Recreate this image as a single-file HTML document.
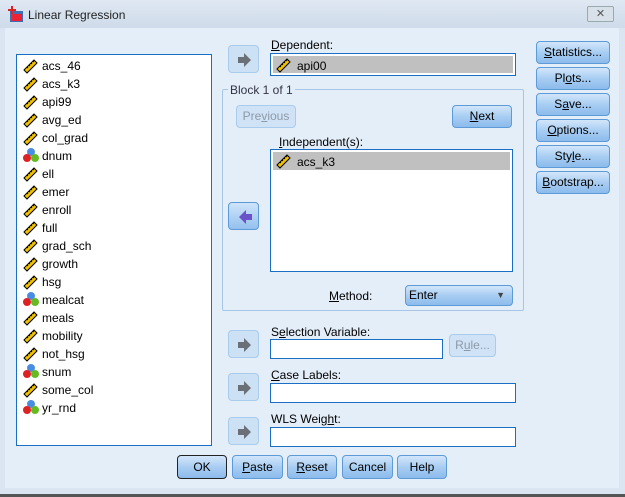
<!DOCTYPE html><html><head><style>
*{box-sizing:border-box;margin:0;padding:0}
body{width:625px;height:497px;overflow:hidden;background:#dbe5f1;font-family:"Liberation Sans",sans-serif;font-size:12px;color:#000;position:relative}
.a{position:absolute}
.title{left:0;top:0;width:625px;height:28px;background:linear-gradient(#dfe8f3,#cfdbea)}
.body{left:5px;top:28px;width:614px;height:460px;background:#e3eef9}
.list{background:#fff;border:1px solid #1a6fc4}
.btn{position:absolute;border:1px solid #5c9ad8;border-radius:4px;background:linear-gradient(#d3e6fa,#a8cdf2 50%,#8cbbec);text-align:center;font-size:12px;line-height:20px}
.dis{border-color:#a9cbec;background:#cfe2f6;color:#8d9aa8}
.arr{position:absolute;width:31px;height:28px;border:1px solid #a9cbec;border-radius:4px;background:#cde1f5}
.arr svg{position:absolute;left:7px;top:5px}
.lbl{position:absolute;font-size:12px}
u{text-decoration:underline}
</style></head><body>
<div class="a title"></div>
<svg class="a" style="left:6px;top:5px" width="18" height="18"><rect x="4" y="6" width="13" height="11" fill="#3f6fb3"/><rect x="6" y="9" width="10" height="7" fill="#e23"/><path d="M2 5h8M6 1v8" stroke="#d22" stroke-width="2"/></svg>
<div class="lbl" style="left:28px;top:8px;font-size:12px;color:#222">Linear Regression</div>
<div class="a" style="left:587px;top:6px;width:27px;height:16px;border:1px solid #9aa;border-radius:2px;background:#d8e0ea;text-align:center;font-size:11px;line-height:14px;color:#555">✕</div>
<div class="a body"></div>
<div class="a list" style="left:16px;top:54px;width:196px;height:392px"></div>
<div id="L"></div>
<svg width="0" height="0" style="position:absolute"><defs>
<g id="r"><path d="M2 13L12 3L15 6L5 16Z" fill="#f2c200" stroke="#000" stroke-width="1"/><path d="M5 10l1 1M7 8l1 1M9 6l1 1M11 4l1 1" stroke="#000"/></g>
<g id="n"><circle cx="9" cy="5" r="4" fill="#4a8de0"/><circle cx="5" cy="11" r="4" fill="#d22"/><circle cx="13" cy="11" r="4" fill="#6b2"/></g>
<path id="ra" d="M2 6L8 6L8 2L15 9L8 16L8 12L2 12Z"/>
</defs></svg>
<script>
var v=[["acs_46","r"],["acs_k3","r"],["api99","r"],["avg_ed","r"],["col_grad","r"],["dnum","n"],["ell","r"],["emer","r"],["enroll","r"],["full","r"],["grad_sch","r"],["growth","r"],["hsg","r"],["mealcat","n"],["meals","r"],["mobility","r"],["not_hsg","r"],["snum","n"],["some_col","r"],["yr_rnd","n"]];
var h="";v.forEach(function(x,i){var y=57+i*18;h+='<svg class="a" style="left:22px;top:'+(y)+'px" width="18" height="18"><use href="#'+x[1]+'"/></svg><div class="lbl" style="left:42px;top:'+(y+2)+'px">'+x[0]+'</div>'});document.getElementById("L").innerHTML=h;
</script>
<div class="arr" style="left:228px;top:45px"><svg width="18" height="18"><use href="#ra" fill="#6b6f78"/></svg></div>
<div class="lbl" style="left:271px;top:38px"><u>D</u>ependent:</div>
<div class="a list" style="left:270px;top:53px;width:246px;height:23px"><div class="a" style="left:2px;top:2px;width:240px;height:17px;background:#c0c0c0"></div></div>
<svg class="a" style="left:275px;top:56px" width="18" height="18"><use href="#r"/></svg><div class="lbl" style="left:297px;top:59px">api00</div>
<div class="a" style="left:222px;top:89px;width:302px;height:222px;border:1px solid #a7c6e6;border-radius:2px"></div>
<div class="lbl" style="left:228px;top:83px;background:#e3eef9;padding:0 2px;color:#334">Block 1 of 1</div>
<div class="btn dis" style="left:236px;top:105px;width:60px;height:23px">Pre<u>v</u>ious</div>
<div class="btn" style="left:452px;top:105px;width:60px;height:23px"><u>N</u>ext</div>
<div class="lbl" style="left:279px;top:135px"><u>I</u>ndependent(s):</div>
<div class="a list" style="left:270px;top:149px;width:243px;height:123px"><div class="a" style="left:2px;top:2px;width:237px;height:18px;background:#c0c0c0"></div></div>
<svg class="a" style="left:275px;top:152px" width="18" height="18"><use href="#r"/></svg><div class="lbl" style="left:297px;top:155px">acs_k3</div>
<div class="arr" style="left:228px;top:202px;border-color:#5c9ad8;background:linear-gradient(#cfe4fa,#94c0ee)"><svg width="18" height="18" style="transform:scaleX(-1)"><use href="#ra" fill="#6a52c8"/></svg></div>
<div class="lbl" style="left:329px;top:289px"><u>M</u>ethod:</div>
<div class="btn" style="left:405px;top:285px;width:108px;height:21px;text-align:left;padding-left:3px;line-height:19px">Enter<span style="position:absolute;right:7px;top:0;font-size:9px;color:#444">▼</span></div>
<div class="arr" style="left:228px;top:330px"><svg width="18" height="18"><use href="#ra" fill="#6b6f78"/></svg></div>
<div class="lbl" style="left:271px;top:325px">S<u>e</u>lection Variable:</div>
<div class="a list" style="left:270px;top:339px;width:173px;height:20px"></div>
<div class="btn dis" style="left:449px;top:334px;width:47px;height:23px">R<u>u</u>le...</div>
<div class="arr" style="left:228px;top:373px"><svg width="18" height="18"><use href="#ra" fill="#6b6f78"/></svg></div>
<div class="lbl" style="left:271px;top:368px"><u>C</u>ase Labels:</div>
<div class="a list" style="left:270px;top:383px;width:246px;height:20px"></div>
<div class="arr" style="left:228px;top:417px"><svg width="18" height="18"><use href="#ra" fill="#6b6f78"/></svg></div>
<div class="lbl" style="left:271px;top:412px">WLS Weig<u>h</u>t:</div>
<div class="a list" style="left:270px;top:427px;width:246px;height:20px"></div>
<div class="btn" style="left:177px;top:455px;width:50px;height:24px;border:1px solid #222;line-height:22px">OK</div>
<div class="btn" style="left:232px;top:455px;width:51px;height:24px;line-height:22px"><u>P</u>aste</div>
<div class="btn" style="left:287px;top:455px;width:50px;height:24px;line-height:22px"><u>R</u>eset</div>
<div class="btn" style="left:342px;top:455px;width:51px;height:24px;line-height:22px">Cancel</div>
<div class="btn" style="left:397px;top:455px;width:50px;height:24px;line-height:22px">Help</div>
<div class="btn" style="left:536px;top:41px;width:74px;height:23px"><u>S</u>tatistics...</div>
<div class="btn" style="left:536px;top:67px;width:74px;height:23px">Pl<u>o</u>ts...</div>
<div class="btn" style="left:536px;top:93px;width:74px;height:23px">S<u>a</u>ve...</div>
<div class="btn" style="left:536px;top:119px;width:74px;height:23px"><u>O</u>ptions...</div>
<div class="btn" style="left:536px;top:145px;width:74px;height:23px">Sty<u>l</u>e...</div>
<div class="btn" style="left:536px;top:171px;width:74px;height:23px"><u>B</u>ootstrap...</div>
<div class="a" style="left:0;top:494px;width:625px;height:3px;background:#555"></div>
</body></html>
